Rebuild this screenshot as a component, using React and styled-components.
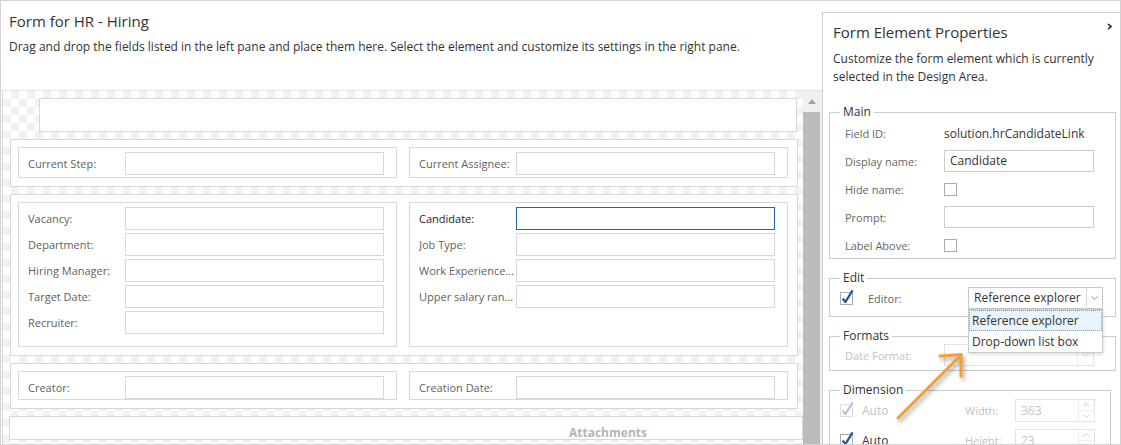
import React from "react";
import styled, { createGlobalStyle } from "styled-components";

const GlobalStyle = createGlobalStyle`
  html, body {
    margin: 0;
    padding: 0;
    background: #fff;
  }

  body {
    font-family: "Open Sans", "Liberation Sans", Arial, sans-serif;
    color: #333;
  }

  *, *::before, *::after {
    box-sizing: border-box;
  }
`;

const Frame = styled.div`
  position: relative;
  display: flex;
  width: 1121px;
  height: 445px;
  border: 1px solid #d4d4d4;
  background: #fff;
  overflow: hidden;
`;

/* ---------- design area ---------- */

const DesignPane = styled.section`
  flex: 1;
  min-width: 0;
  display: flex;
  flex-direction: column;
`;

const Header = styled.header`
  flex: none;
  height: 89px;
  padding: 10px 0 0 8px;
`;

const Title = styled.h1`
  margin: 0;
  font-size: 15px;
  line-height: 20px;
  font-weight: 400;
  color: #333;
`;

const Hint = styled.p`
  margin: 8px 0 0;
  font-size: 12px;
  line-height: 16px;
  color: #333;
`;

const Canvas = styled.div`
  flex: 1;
  min-height: 0;
  display: flex;
  border-top: 1px solid #e2e2e2;
`;

const Board = styled.div`
  flex: 1;
  min-width: 0;
  display: flex;
  flex-direction: column;
  gap: 7px;
  margin-left: 1px;
  padding: 7px 5px 0 7px;
  border-left: 1px solid #d8d8d8;
  background: repeating-conic-gradient(#eef2f7 0 25%, #fff 0 50%) 0 0 / 16px 16px;
  overflow: hidden;
`;

const Placeholder = styled.div`
  flex: none;
  height: 34px;
  margin: 0 1px 0 29px;
  border: 1px solid #d5d8dc;
  background: #fff;
`;

const Section = styled.div`
  flex: none;
  display: grid;
  grid-template-columns: 1fr 1fr;
  gap: 12px;
  padding: 7px 9px 8px 7px;
  border: 1px solid #d5d8dc;
  background: #fff;
`;

const FieldBox = styled.div`
  display: flex;
  flex-direction: column;
  gap: 3px;
  padding: 4px 12px ${({ $pb }) => $pb}px 9px;
  border: 1px solid #d5d8dc;
`;

const FieldRow = styled.div`
  display: flex;
  align-items: center;
`;

const FieldLabel = styled.span`
  flex: none;
  width: 97px;
  font-size: 11px;
  color: ${({ $active }) => ($active ? "#222" : "#5f5f5f")};
  white-space: nowrap;
  overflow: hidden;
  text-overflow: ellipsis;
`;

const FieldInput = styled.div`
  flex: 1;
  height: 23px;
  border: 1px solid ${({ $active }) => ($active ? "#1f66ab" : "#d5d8dc")};
  background: #fff;
`;

const Attachments = styled.div`
  flex: none;
  height: 24px;
  margin: 0 -5px 0 -1px;
  padding: 9px 0 0 559px;
  border: 1px solid #d5d8dc;
  background: #fff;
  font-size: 12px;
  line-height: 13px;
  font-weight: 700;
  color: #b5b5b5;
  overflow: hidden;
`;

const Scrollbar = styled.div`
  flex: none;
  width: 19px;
  display: flex;
  flex-direction: column;
  background: #f0f0f0;
`;

const ScrollButton = styled.div`
  height: 21px;
  display: flex;
  align-items: center;
  justify-content: center;
  padding-right: 2px;
`;

const ScrollThumb = styled.div`
  flex: 1;
  margin-right: 2px;
  background: #bcbcbc;
`;

/* ---------- properties panel ---------- */

const Inspector = styled.aside`
  flex: none;
  width: 298px;
  margin-top: 11px;
  border-top: 1px solid #d0d0d0;
  border-left: 1px solid #d0d0d0;
`;

const InspectorHead = styled.div`
  display: flex;
  justify-content: space-between;
  align-items: flex-start;
  padding: 9px 8px 0 10px;
`;

const InspectorTitle = styled.h2`
  margin: 0;
  font-size: 15px;
  line-height: 20px;
  font-weight: 400;
  color: #333;
`;

const Collapse = styled.svg`
  margin-top: 1px;
`;

const InspectorHint = styled.p`
  margin: 8px 0 0;
  padding: 0 16px 0 10px;
  font-size: 12px;
  line-height: 18px;
  color: #333;
`;

const Group = styled.fieldset`
  margin: ${({ $mt }) => $mt}px ${({ $mr }) => $mr}px 0 6px;
  padding: 0 8px ${({ $pb }) => $pb}px 10px;
  border: 1px solid #c9cdd1;
  min-width: 0;
`;

const Legend = styled.legend`
  padding: 0 3px;
  font-size: 12px;
  line-height: 16px;
  color: #333;
`;

const PropList = styled.div`
  display: flex;
  flex-direction: column;
  gap: ${({ $gap }) => $gap}px;
`;

const PropRow = styled.div`
  display: flex;
  align-items: center;
  height: ${({ $h }) => $h}px;
  padding-left: ${({ $indent }) => $indent}px;
`;

const PropLabel = styled.span`
  flex: none;
  width: ${({ $w }) => $w}px;
  margin-left: ${({ $ml }) => $ml || 0}px;
  font-size: ${({ $size }) => $size || 11}px;
  color: ${({ $tone }) =>
    $tone === "dark" ? "#333" : $tone === "off" ? "#c2c2c2" : "#666"};
  white-space: nowrap;
`;

const PropValue = styled.span`
  font-size: 12px;
  color: #333;
`;

const TextBox = styled.div`
  width: 150px;
  height: 22px;
  padding-left: 5px;
  border: 1px solid #c9cdd1;
  font-size: 12px;
  line-height: 20px;
  color: #333;
`;

const Box = styled.svg`
  flex: none;
  margin-top: -3px;
  overflow: visible;
`;

const SelectWrap = styled.div`
  position: relative;
  flex: none;
`;

const Select = styled.div`
  display: flex;
  width: ${({ $w }) => $w}px;
  height: 22px;
  border: 1px solid ${({ $off }) => ($off ? "#e3e3e3" : "#c6cacd")};
  background: #fff;
  font-size: 12px;
  color: #333;
`;

const SelectValue = styled.span`
  flex: 1;
  padding-left: 5px;
  line-height: 20px;
  white-space: nowrap;
  overflow: hidden;
`;

const SelectButton = styled.span`
  flex: none;
  width: 16px;
  display: flex;
  align-items: center;
  justify-content: center;
  border-left: 1px solid ${({ $off }) => ($off ? "#ececec" : "#d6d9dc")};
`;

const Menu = styled.ul`
  position: absolute;
  top: 100%;
  left: 0;
  width: 135px;
  margin: 0;
  padding: 0;
  list-style: none;
  border: 1px solid #c6cacd;
  background: #fff;
  box-shadow: 1px 2px 3px rgba(0, 0, 0, 0.12);
  z-index: 2;
`;

const MenuItem = styled.li`
  height: 21px;
  padding-left: 2px;
  border: 1px ${({ $active }) => ($active ? "dotted #6f9fd4" : "solid transparent")};
  background: ${({ $active }) => ($active ? "#e9f3fb" : "transparent")};
  font-size: 12px;
  line-height: 19px;
  color: #333;
`;

const SpinBox = styled.div`
  flex: none;
  display: flex;
  width: 80px;
  height: 23px;
  border: 1px solid #e3e3e3;
  font-size: 12px;
  color: #c4c4c4;
`;

const SpinValue = styled.span`
  flex: 1;
  padding-left: 5px;
  line-height: 21px;
`;

const SpinButtons = styled.span`
  flex: none;
  width: 16px;
  display: flex;
  flex-direction: column;
  border-left: 1px solid #ececec;
`;

const SpinHalf = styled.span`
  flex: 1;
  display: flex;
  align-items: center;
  justify-content: center;

  & + & {
    border-top: 1px solid #efefef;
  }
`;

const Pointer = styled.svg`
  position: absolute;
  left: 889px;
  top: 344px;
  pointer-events: none;
  overflow: visible;
  filter: drop-shadow(2px 3px 2px rgba(0, 0, 0, 0.35));
`;

/* ---------- small drawings ---------- */

const CheckIcon = ({ checked, off }) => (
  <Box width="13" height="16" viewBox="0 -3 13 16">
    <rect x="0.5" y="0.5" width="12" height="12" fill="#fff" stroke={off ? "#dcdcdc" : "#a9adb1"} />
    {checked && (
      <path
        d="M2.6 6.6 L5.4 10 L12.6 -1.6"
        fill="none"
        stroke={off ? "#b3cade" : "#1f5d91"}
        strokeWidth="2.3"
        strokeLinejoin="round"
      />
    )}
  </Box>
);

const Caret = ({ up, color = "#8a8a8a" }) => (
  <svg width="7" height="4" viewBox="0 0 7 4">
    <path d={up ? "M0.5 3.5 L3.5 0.5 L6.5 3.5" : "M0.5 0.5 L3.5 3.5 L6.5 0.5"} fill="none" stroke={color} strokeWidth="1" />
  </svg>
);

/* ---------- data ---------- */

const leftFields = ["Vacancy:", "Department:", "Hiring Manager:", "Target Date:", "Recruiter:"];
const rightFields = ["Candidate:", "Job Type:", "Work Experience Required:", "Upper salary range:"];

const Fields = ({ items, pb, active }) => (
  <FieldBox $pb={pb}>
    {items.map((label) => (
      <FieldRow key={label}>
        <FieldLabel $active={label === active}>{label}</FieldLabel>
        <FieldInput $active={label === active} />
      </FieldRow>
    ))}
  </FieldBox>
);

const App = () => (
  <Frame>
    <GlobalStyle />
    <DesignPane>
      <Header>
        <Title>Form for HR - Hiring</Title>
        <Hint>
          Drag and drop the fields listed in the left pane and place them here. Select the element and
          customize its settings in the right pane.
        </Hint>
      </Header>
      <Canvas>
        <Board>
          <Placeholder />
          <Section>
            <Fields items={["Current Step:"]} pb={2} />
            <Fields items={["Current Assignee:"]} pb={2} />
          </Section>
          <Section>
            <Fields items={leftFields} pb={12} />
            <Fields items={rightFields} pb={12} active="Candidate:" />
          </Section>
          <Section>
            <Fields items={["Creator:"]} pb={0} />
            <Fields items={["Creation Date:"]} pb={0} />
          </Section>
          <Attachments>Attachments</Attachments>
        </Board>
        <Scrollbar>
          <ScrollButton>
            <svg width="8" height="5" viewBox="0 0 8 5">
              <polygon points="0,5 4,0 8,5" fill="#a3a3a3" />
            </svg>
          </ScrollButton>
          <ScrollThumb />
        </Scrollbar>
      </Canvas>
    </DesignPane>

    <Inspector>
      <InspectorHead>
        <InspectorTitle>Form Element Properties</InspectorTitle>
        <Collapse width="5" height="7" viewBox="0 0 5 7">
          <path d="M1 1 L4 3.5 L1 6" fill="none" stroke="#222" strokeWidth="1.6" />
        </Collapse>
      </InspectorHead>
      <InspectorHint>
        Customize the form element which is currently selected in the Design Area.
      </InspectorHint>

      <Group $mt={18} $mr={4} $pb={0}>
        <Legend>Main</Legend>
        <PropList $gap={2}>
          <PropRow $h={26} $indent={5}>
            <PropLabel $w={99}>Field ID:</PropLabel>
            <PropValue>solution.hrCandidateLink</PropValue>
          </PropRow>
          <PropRow $h={26} $indent={5}>
            <PropLabel $w={99}>Display name:</PropLabel>
            <TextBox>Candidate</TextBox>
          </PropRow>
          <PropRow $h={26} $indent={5}>
            <PropLabel $w={99}>Hide name:</PropLabel>
            <CheckIcon />
          </PropRow>
          <PropRow $h={26} $indent={5}>
            <PropLabel $w={99}>Prompt:</PropLabel>
            <TextBox />
          </PropRow>
          <PropRow $h={26} $indent={5}>
            <PropLabel $w={99}>Label Above:</PropLabel>
            <CheckIcon />
          </PropRow>
        </PropList>
      </Group>

      <Group $mt={11} $mr={4} $pb={6}>
        <Legend>Edit</Legend>
        <PropRow $h={24} $indent={-1}>
          <CheckIcon checked />
          <PropLabel $w={100} $ml={15}>Editor:</PropLabel>
          <SelectWrap>
            <Select $w={135}>
              <SelectValue>Reference explorer</SelectValue>
              <SelectButton>
                <Caret color="#999" />
              </SelectButton>
            </Select>
            <Menu>
              <MenuItem $active>Reference explorer</MenuItem>
              <MenuItem>Drop-down list box</MenuItem>
            </Menu>
          </SelectWrap>
        </PropRow>
      </Group>

      <Group $mt={11} $mr={4} $pb={4}>
        <Legend>Formats</Legend>
        <PropRow $h={22} $indent={5}>
          <PropLabel $w={99} $tone="off">Date Format:</PropLabel>
          <Select $w={150} $off>
            <SelectValue />
            <SelectButton $off>
              <Caret color="#d0d0d0" />
            </SelectButton>
          </Select>
        </PropRow>
      </Group>

      <Group $mt={11} $mr={9} $pb={4}>
        <Legend>Dimension</Legend>
        <PropList $gap={6}>
          {[
            ["Width:", "363", true],
            ["Height:", "23", false],
          ].map(([label, value, off]) => (
            <PropRow key={label} $h={24} $indent={-1}>
              <CheckIcon checked off={off} />
              <PropLabel $w={103} $ml={9} $size={12} $tone={off ? "off" : "dark"}>
                Auto
              </PropLabel>
              <PropLabel $w={50} $tone="off">
                {label}
              </PropLabel>
              <SpinBox>
                <SpinValue>{value}</SpinValue>
                <SpinButtons>
                  <SpinHalf>
                    <Caret up color="#cfcfcf" />
                  </SpinHalf>
                  <SpinHalf>
                    <Caret color="#cfcfcf" />
                  </SpinHalf>
                </SpinButtons>
              </SpinBox>
            </PropRow>
          ))}
        </PropList>
      </Group>
    </Inspector>

    <Pointer width="80" height="80" viewBox="0 0 80 80">
      <g fill="none" stroke="#f39f36" strokeWidth="3" strokeLinecap="round" strokeLinejoin="round">
        <path d="M8 73 L71 10" />
        <path d="M50 11 L71 9.5 L71 31" />
      </g>
    </Pointer>
  </Frame>
);

export default App;
